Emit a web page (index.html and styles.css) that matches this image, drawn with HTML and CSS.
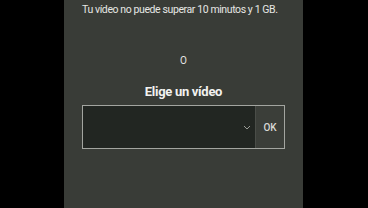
FILE: index.html
```html
<!DOCTYPE html>
<html lang="es">
<head>
  <meta charset="UTF-8">
  <title>Elige un vídeo</title>
  <link rel="stylesheet" href="styles.css">
</head>
<body>

<div class="panel">
  <p class="limit">Tu vídeo no puede superar 10 minutos y 1 GB.</p>
  <p class="or">O</p>
  <h2 class="pick-title">Elige un vídeo</h2>
  <div class="picker">
    <div class="select">
      <svg class="chevron" width="8" height="5" viewBox="0 0 8 5">
        <path d="M1 1 L4 4 L7 1" fill="none" stroke="#9a9c97" stroke-width="1"/>
      </svg>
    </div>
    <button class="ok">OK</button>
  </div>
</div>

</body>
</html>
```

FILE: styles.css
```css
body {
  margin: 0;
  background-color: #000;
  font-family: Roboto, "Liberation Sans", sans-serif;
  height: 208px;
  overflow: hidden;
}

.panel {
  width: 239px;
  height: 208px;
  margin-left: 64px;
  background-color: #393c37;
  color: #e6e7e4;
  text-align: center;
  box-sizing: border-box;
  padding-top: 3px;
}

.limit {
  margin: 0 0 0 18px;
  text-align: left;
  font-size: 10.5px;
  line-height: 14px;
  letter-spacing: -0.4px;
}

.or {
  margin: 37px 0 0 0;
  font-size: 10px;
  line-height: 14px;
}

.pick-title {
  margin: 16px 0 0 0;
  font-size: 13px;
  line-height: 16px;
  font-weight: bold;
  letter-spacing: -0.3px;
  color: #f2f2f0;
}

.picker {
  display: flex;
  margin: 5px 0 0 18px;
  width: 203px;
  height: 44px;
  border: 1px solid #a3a5a0;
  box-sizing: border-box;
}

.select {
  flex: 1;
  background-color: #222622;
  display: flex;
  align-items: center;
  justify-content: flex-end;
  padding-right: 4px;
}

.ok {
  width: 29px;
  border: none;
  border-left: 1px solid #4a4d48;
  background-color: #3b3e39;
  color: #d8d9d6;
  font-family: Roboto, "Liberation Sans", sans-serif;
  font-size: 10px;
  font-weight: 500;
  padding: 0;
}
```
